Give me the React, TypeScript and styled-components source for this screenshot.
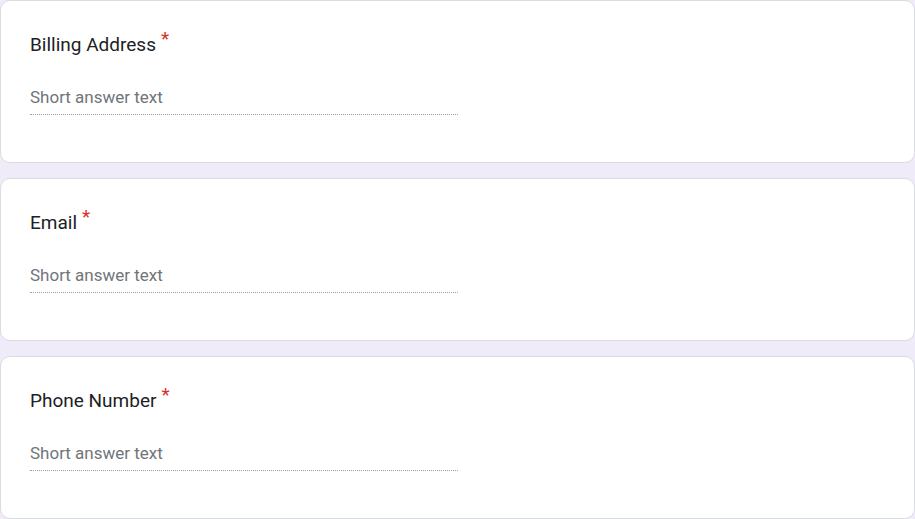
import React from 'react';
import styled, { createGlobalStyle } from 'styled-components';

const GlobalStyle = createGlobalStyle`
  html, body {
    margin: 0;
    padding: 0;
    background: #f0ebf8;
  }

  body {
    font-family: Roboto, "Liberation Sans", Arial, sans-serif;
  }
`;

const Page = styled.div`
  display: flex;
  flex-direction: column;
  gap: 15px;
  width: 915px;
`;

const Card = styled.div`
  background: #fff;
  border: 1px solid #dadce0;
  border-radius: 10px;
  box-sizing: border-box;
  height: 163px;
  padding: 29px 29px 0;
`;

const Title = styled.div`
  color: #202124;
  font-size: 19px;
  line-height: 30px;
`;

const Required = styled.span`
  color: #d93025;
  display: inline-block;
  line-height: 0;
  padding-left: 5px;
  vertical-align: 6px;
`;

const Answer = styled.div`
  border-bottom: 1px dotted #9aa0a6;
  box-sizing: border-box;
  color: #70757a;
  font-size: 17px;
  height: 35px;
  line-height: 34px;
  margin-top: 20px;
  width: 428px;
`;

const questions = ['Billing Address', 'Email', 'Phone Number'];

export default function App() {
  return (
    <>
      <GlobalStyle />
      <Page>
        {questions.map(q => (
          <Card key={q}>
            <Title>
              {q}
              <Required>*</Required>
            </Title>
            <Answer>Short answer text</Answer>
          </Card>
        ))}
      </Page>
    </>
  );
}
